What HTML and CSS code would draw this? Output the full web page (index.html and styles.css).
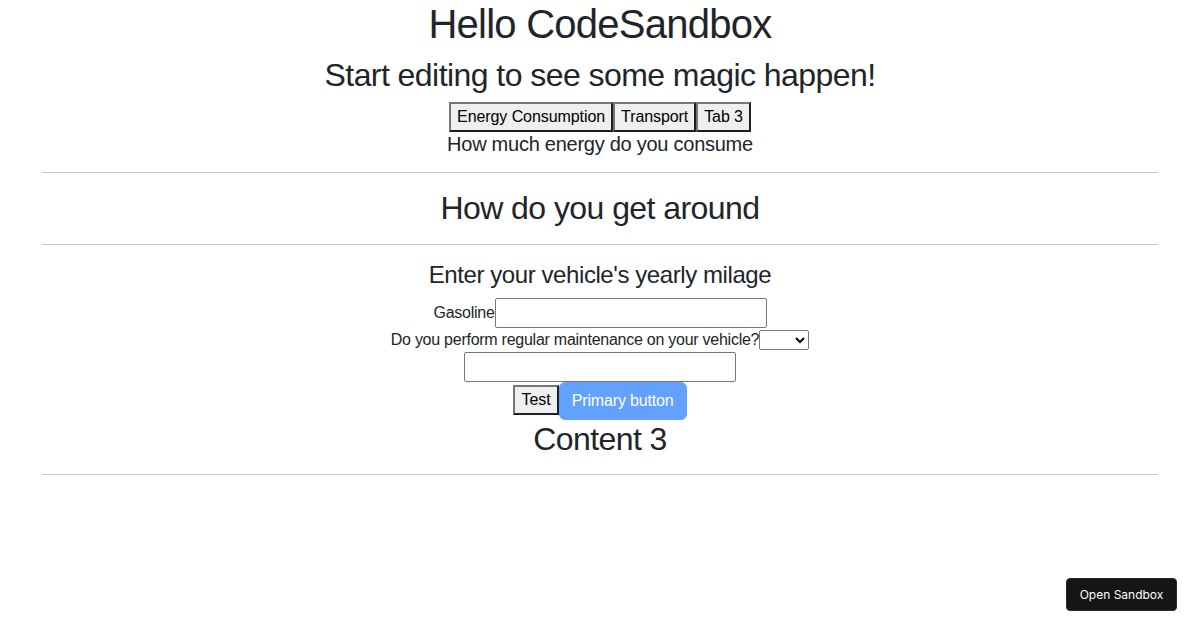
FILE: index.html
```html
<!DOCTYPE html>
<html>
<head>
<meta charset="utf-8">
<link rel="stylesheet" href="styles.css">
</head>
<body>
<div class="app">
  <h1 class="h1">Hello CodeSandbox</h1>
  <h2 class="h2">Start editing to see some magic happen!</h2>
  <div class="tabs"><button class="tab">Energy Consumption</button><button class="tab">Transport</button><button class="tab">Tab 3</button></div>
  <div class="lead">How much energy do you consume</div>
  <hr class="rule">
  <h2 class="h2">How do you get around</h2>
  <hr class="rule">
  <h4 class="h4">Enter your vehicle's yearly milage</h4>
  <div class="row"><label class="label">Gasoline</label><input class="field" type="text"></div>
  <div class="row"><label class="label">Do you perform regular maintenance on your vehicle?</label><select class="sel"></select></div>
  <div class="row"><input class="field" type="text"></div>
  <div class="row btnrow"><button class="tab test">Test</button><button class="primary">Primary button</button></div>
  <h2 class="h2">Content 3</h2>
  <hr class="rule">
</div>
<button class="open">Open Sandbox</button>
</body>
</html>
```
FILE: styles.css
```css
html, body {
  margin: 0;
  padding: 0;
  background: #fff;
}
body {
  font-family: "Liberation Sans", Arial, sans-serif;
  font-size: 16px;
  line-height: 1.5;
  color: #212529;
  letter-spacing: -0.016em;
}
.app {
  text-align: center;
  padding: 0 42px;
}
.h1, .h2, .h4 {
  margin: 0 0 8px;
  font-weight: 400;
  line-height: 1.2;
  letter-spacing: -0.0175em;
}
.h1 { font-size: 40px; letter-spacing: -0.0185em; }
.h2 { font-size: 32px; }
.h4 { font-size: 24px; }
.tabs {
  display: flex;
  justify-content: center;
  height: 30px;
}
.tab {
  font-family: "Liberation Sans", Arial, sans-serif;
  font-size: 16px;
  letter-spacing: -0.005em;
  line-height: 24px;
  color: #000;
  background: #efefef;
  padding: 1px 6px;
  margin: 0;
  border-width: 2px;
  border-style: solid;
  border-color: #767676 #1f1f1f #1f1f1f #767676;
  border-radius: 0;
}
.lead {
  font-size: 20px;
  line-height: 24px;
}
.rule {
  margin: 16px 0;
  border: 0;
  border-top: 1px solid #c8c9ca;
  height: 0;
}
.row {
  display: flex;
  justify-content: center;
  align-items: center;
}
.label {
  line-height: 24px;
}
.field {
  box-sizing: border-box;
  width: 272px;
  height: 30px;
  margin: 0;
  border: 1px solid #767676;
  border-radius: 2px;
  padding: 1px 2px;
  font-family: inherit;
  font-size: 16px;
  background: #fff;
}
.sel {
  box-sizing: border-box;
  width: 50px;
  height: 20px;
  margin: 0;
  font-size: 13px;
  border: 1px solid #767676;
  border-radius: 2px;
  background: #fff;
}
.btnrow {
  height: 38px;
  align-items: flex-start;
}
.test {
  height: 30px;
  margin-top: 3px;
  letter-spacing: 0;
}
.primary {
  font-family: "Liberation Sans", Arial, sans-serif;
  font-size: 16px;
  letter-spacing: -0.01em;
  line-height: 24px;
  color: #fff;
  background: #62a1fe;
  border: 1px solid #62a1fe;
  border-radius: 6px;
  padding: 6px 12px;
  margin: 0;
}
.open {
  position: fixed;
  right: 23px;
  bottom: 19px;
  width: 111px;
  height: 33px;
  background: #151515;
  color: #fff;
  border: 1px solid #2a2a2a;
  border-radius: 4px;
  font-family: Inter, "Liberation Sans", sans-serif;
  font-size: 12px;
  letter-spacing: 0;
  padding: 0;
}
```
